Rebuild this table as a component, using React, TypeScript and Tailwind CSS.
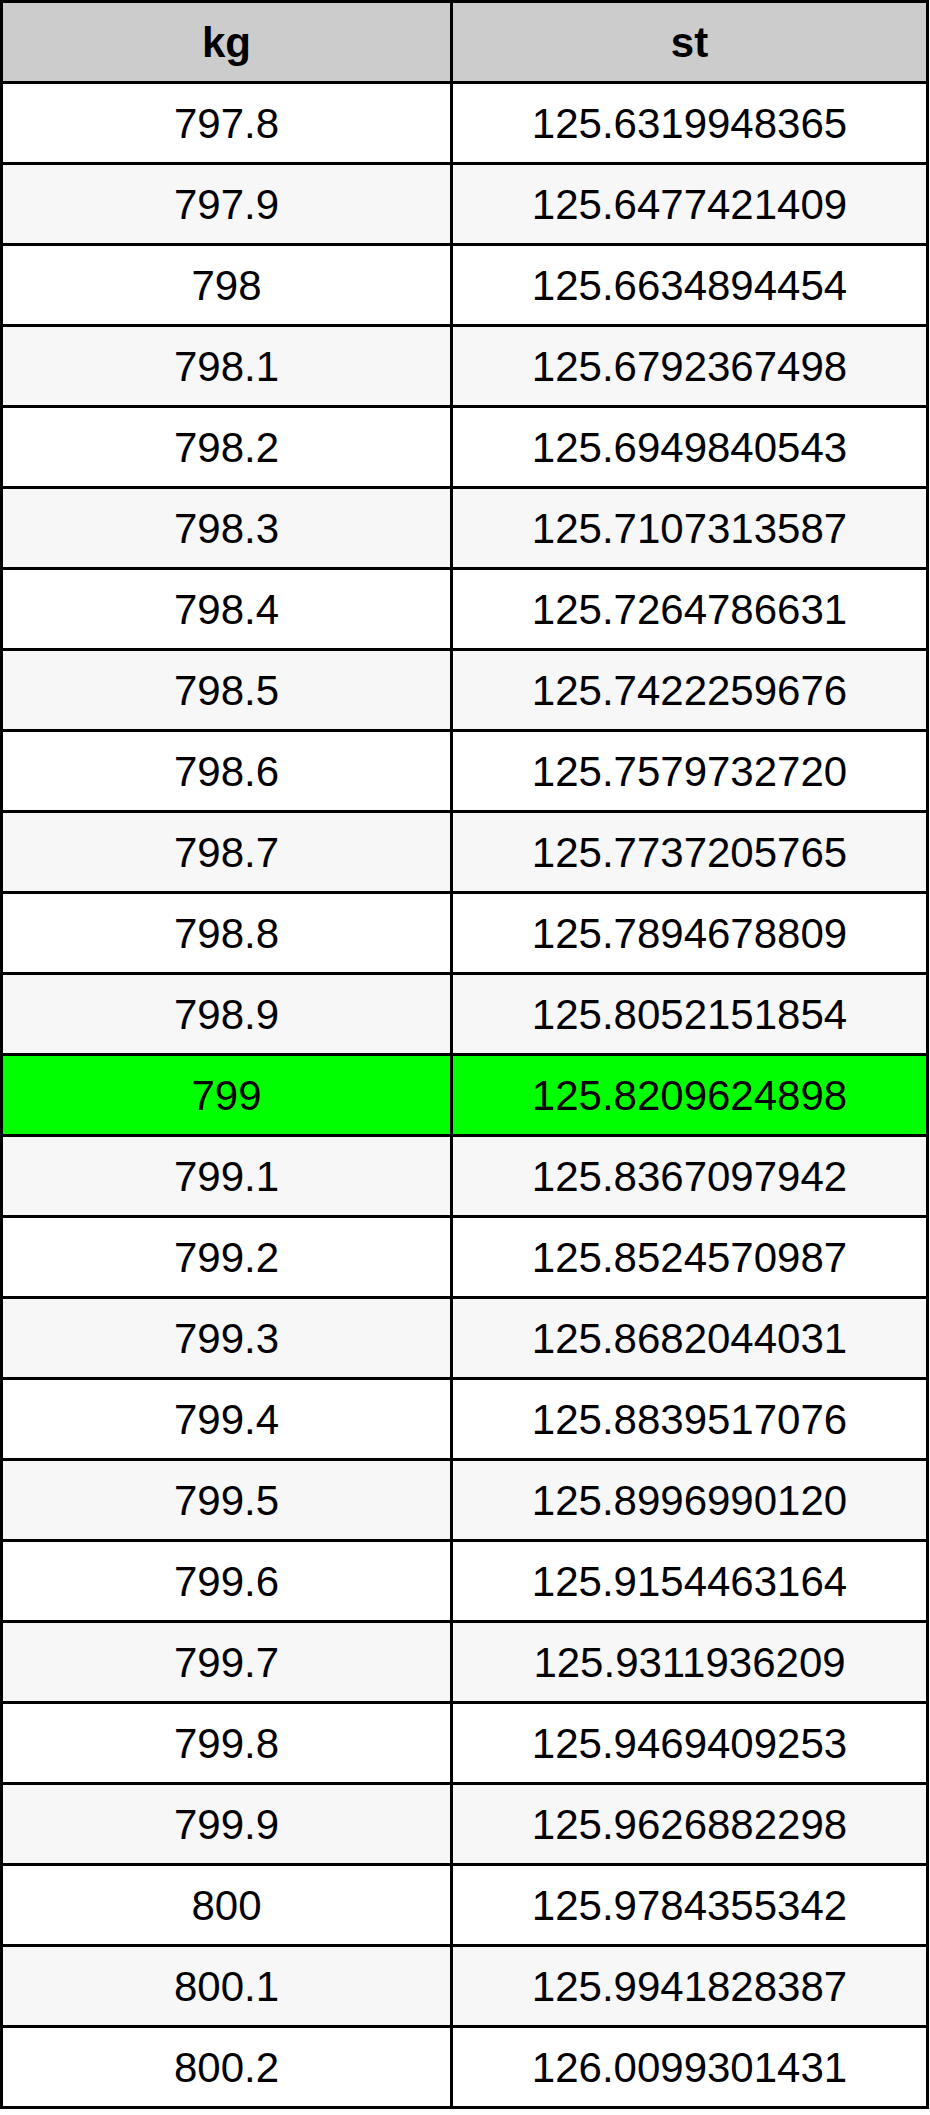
const rows: [string, string][] = [
  ["797.8", "125.6319948365"],
  ["797.9", "125.6477421409"],
  ["798", "125.6634894454"],
  ["798.1", "125.6792367498"],
  ["798.2", "125.6949840543"],
  ["798.3", "125.7107313587"],
  ["798.4", "125.7264786631"],
  ["798.5", "125.7422259676"],
  ["798.6", "125.7579732720"],
  ["798.7", "125.7737205765"],
  ["798.8", "125.7894678809"],
  ["798.9", "125.8052151854"],
  ["799", "125.8209624898"],
  ["799.1", "125.8367097942"],
  ["799.2", "125.8524570987"],
  ["799.3", "125.8682044031"],
  ["799.4", "125.8839517076"],
  ["799.5", "125.8996990120"],
  ["799.6", "125.9154463164"],
  ["799.7", "125.9311936209"],
  ["799.8", "125.9469409253"],
  ["799.9", "125.9626882298"],
  ["800", "125.9784355342"],
  ["800.1", "125.9941828387"],
  ["800.2", "126.0099301431"],
];

export default function App() {
  return (
    <div className="bg-white min-h-[2115px] font-['Liberation_Sans',Arial,sans-serif] text-black">
      <table className="w-[929px] border-collapse border-[3px] border-black table-fixed">
        <thead>
          <tr className="h-[81px] bg-[#cccccc]">
            <th className="w-[450px] border-[3px] border-black text-[42px] font-bold p-0">kg</th>
            <th className="border-[3px] border-black text-[42px] font-bold p-0">st</th>
          </tr>
        </thead>
        <tbody>
          {rows.map(([kg, st], i) => {
            const bg = kg === "799" ? "bg-[#00ff00]" : i % 2 === 1 ? "bg-[#f7f7f7]" : "bg-white";
            return (
              <tr key={kg} className={`h-[81px] ${bg}`}>
                <td className="border-[3px] border-black text-center text-[42px] p-0">{kg}</td>
                <td className="border-[3px] border-black text-center text-[42px] p-0">{st}</td>
              </tr>
            );
          })}
        </tbody>
      </table>
    </div>
  );
}
